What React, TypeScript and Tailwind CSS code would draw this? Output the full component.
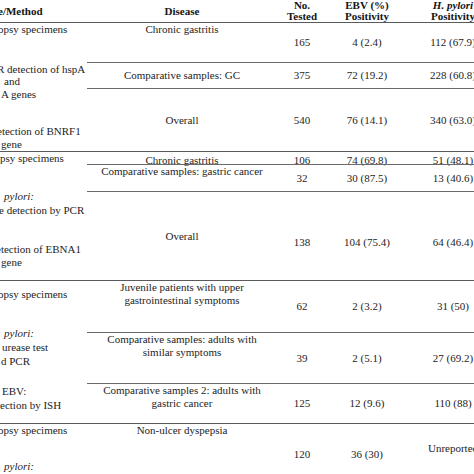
import React from "react"

type Line = { t: string; cls: string; it?: boolean }
type Row = {
  h: string
  disease: string[]
  dTop?: boolean
  tested: string
  ebv: string
  hp: string
  nCls?: string
  hpCls?: string
}
type Group = { lines: Line[]; leading: string; rows: Row[] }

const groups: Group[] = [
  {
    leading: "leading-[12.5px]",
    lines: [
      { t: "opsy specimens", cls: "ml-[-2px]" },
      { t: "R detection of hspA", cls: "mt-[27px] ml-[-3px]" },
      { t: "and", cls: "ml-[4px]" },
      { t: "A genes", cls: "ml-[1px]" },
      { t: "etection of BNRF1", cls: "mt-[25px] ml-[-3px]" },
      { t: "gene", cls: "ml-[1px]" },
    ],
    rows: [
      { h: "h-[39px]", disease: ["Chronic gastritis"], dTop: true, tested: "165", ebv: "4 (2.4)", hp: "112 (67.9)" },
      { h: "h-[26px] border-t", disease: ["Comparative samples: GC"], tested: "375", ebv: "72 (19.2)", hp: "228 (60.8)" },
      { h: "h-[63px] border-t", disease: ["Overall"], tested: "540", ebv: "76 (14.1)", hp: "340 (63.0)" },
    ],
  },
  {
    leading: "leading-[13px]",
    lines: [
      { t: "psy specimens", cls: "ml-[0px]" },
      { t: "pylori:", cls: "mt-[25px] ml-[4px]", it: true },
      { t: "e detection by PCR", cls: "ml-[-1px] mt-[1px]" },
      { t: "etection of EBNA1", cls: "mt-[26px] ml-[-4px]" },
      { t: "gene", cls: "ml-[1px]" },
    ],
    rows: [
      { h: "h-[12px]", disease: ["Chronic gastritis"], tested: "106", ebv: "74 (69.8)", hp: "51 (48.1)" },
      { h: "h-[27px] border-t", disease: ["Comparative samples: gastric cancer"], dTop: true, tested: "32", ebv: "30 (87.5)", hp: "13 (40.6)" },
      { h: "h-[89px] border-t", disease: ["Overall"], tested: "138", ebv: "104 (75.4)", hp: "64 (46.4)", nCls: "pt-[12px]" },
    ],
  },
  {
    leading: "leading-[14px]",
    lines: [
      { t: "opsy specimens", cls: "mt-[6px] ml-[-2px]" },
      { t: "pylori:", cls: "mt-[25px] ml-[4px]", it: true },
      { t: "urease test", cls: "ml-[2px]" },
      { t: "d PCR", cls: "ml-[1px]" },
      { t: "EBV:", cls: "mt-[16px] ml-[2px]" },
      { t: "ection by ISH", cls: "ml-[0px]" },
    ],
    rows: [
      { h: "h-[51px]", disease: ["Juvenile patients with upper", "gastrointestinal symptoms"], dTop: true, tested: "62", ebv: "2 (3.2)", hp: "31 (50)" },
      { h: "h-[51px] border-t", disease: ["Comparative samples: adults with", "similar symptoms"], dTop: true, tested: "39", ebv: "2 (5.1)", hp: "27 (69.2)" },
      { h: "h-[40px] border-t", disease: ["Comparative samples 2: adults with", "gastric cancer"], dTop: true, tested: "125", ebv: "12 (9.6)", hp: "110 (88)" },
    ],
  },
  {
    leading: "leading-[13px]",
    lines: [
      { t: "opsy specimens", cls: "ml-[-2px]" },
      { t: "pylori:", cls: "mt-[23px] ml-[4px]", it: true },
    ],
    rows: [
      { h: "h-[60px]", disease: ["Non-ulcer dyspepsia"], dTop: true, tested: "120", ebv: "36 (30)", hp: "Unreported", hpCls: "pb-[12px]" },
    ],
  },
]

function DataRow({ r }: { r: Row }) {
  return (
    <div className={`grid grid-cols-[190px_50px_80px_92px] border-[#6a6a6a] ${r.h}`}>
      <div className={`flex flex-col items-center text-center leading-[13px] whitespace-nowrap ${r.dTop ? "justify-start" : "justify-center"}`}>
        {r.disease.map((d) => (
          <div key={d}>{d}</div>
        ))}
      </div>
      <div className={`flex items-center justify-center whitespace-nowrap ${r.nCls ?? ""}`}>{r.tested}</div>
      <div className={`flex items-center justify-center whitespace-nowrap ${r.nCls ?? ""}`}>{r.ebv}</div>
      <div className={`flex items-center justify-center whitespace-nowrap ${r.nCls ?? ""} ${r.hpCls ?? ""}`}>{r.hp}</div>
    </div>
  )
}

export default function App() {
  return (
    <div className="w-[474px] h-[474px] overflow-hidden bg-white text-[11px] text-[#1d1d1d] font-['Liberation_Serif',serif]">
      {/* header */}
      <div className="flex h-[23px] border-b border-[#5a5a5a] font-bold text-[#141414] leading-[11px]">
        <div className="w-[87px] shrink-0 flex items-center">
          <span className="ml-[-2px] whitespace-nowrap">e/Method</span>
        </div>
        <div className="grid grid-cols-[190px_50px_80px_92px]">
          <div className="flex items-center justify-center">Disease</div>
          <div className="flex flex-col items-center justify-center text-center">
            <div>No.</div>
            <div>Tested</div>
          </div>
          <div className="flex flex-col items-center justify-center text-center whitespace-nowrap">
            <div>EBV (%)</div>
            <div>Positivity</div>
          </div>
          <div className="flex flex-col items-center justify-center text-center whitespace-nowrap">
            <div className="italic">H. pylori</div>
            <div>Positivity</div>
          </div>
        </div>
      </div>

      {groups.map((g, i) => (
        <div key={i} className="flex border-b border-[#5a5a5a]">
          <div className={`w-[87px] shrink-0 ${g.leading}`}>
            {g.lines.map((l, j) => (
              <div key={j} className={`whitespace-nowrap ${l.cls} ${l.it ? "italic" : ""}`}>
                {l.t}
              </div>
            ))}
          </div>
          <div className="flex flex-col">
            {g.rows.map((r, k) => (
              <DataRow key={k} r={r} />
            ))}
          </div>
        </div>
      ))}
    </div>
  )
}
